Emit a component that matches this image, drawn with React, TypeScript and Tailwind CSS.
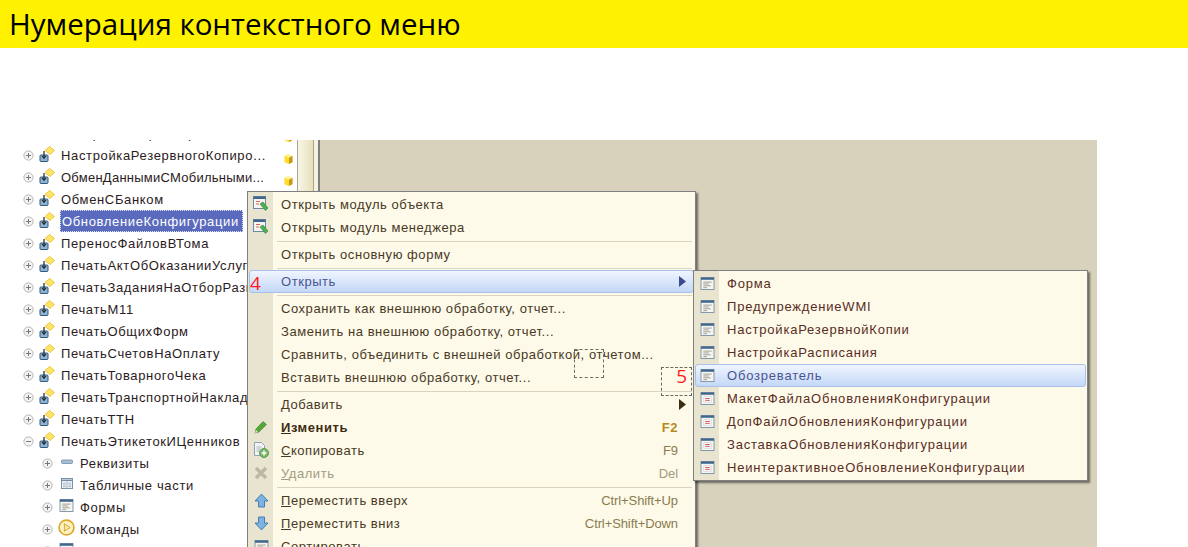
import React from 'react';

// --- icons ---
const Expander = ({ open = false }: { open?: boolean }) => (
  <svg width="11" height="11" viewBox="0 0 11 11" className="shrink-0">
    <circle cx="5.5" cy="5.5" r="4.6" fill="#f4f4f4" stroke="#b4b4b4" />
    <path d={open ? 'M3 5.5h5' : 'M3 5.5h5M5.5 3v5'} stroke="#777" fill="none" />
  </svg>
);

const ModuleIcon = () => (
  <svg width="16" height="17" viewBox="0 0 16 17" className="shrink-0">
    <path d="M10.5 0.5 15.5 4.5l-4.5 4L6 4.5z" fill="#ffe566" stroke="#e8b830" strokeWidth="0.8" />
    <rect x="1" y="9" width="8" height="6.5" rx="1" fill="#8fb4d4" stroke="#33597c" />
    <path d="M5 5v6.5" stroke="#222" strokeWidth="1.2" />
    <path d="M3 10l2 2.4L7 10" fill="none" stroke="#222" strokeWidth="1.1" />
  </svg>
);

const Cube = () => (
  <svg width="9" height="10" viewBox="0 0 9 11" className="block">
    <path d="M0 2 4 0l5 2-4 2z" fill="#fff08a" />
    <path d="M0 2l5 2v7L0 9z" fill="#ffdc2e" />
    <path d="M5 4l4-2v7l-4 2z" fill="#c89a10" />
  </svg>
);

const ReqIcon = () => (
  <svg width="12" height="6" viewBox="0 0 12 6">
    <rect x="0.5" y="1" width="11" height="3.5" rx="1" fill="#a8c0d4" stroke="#6e8ba6" strokeWidth="0.8" />
  </svg>
);

const TableIcon = () => (
  <svg width="12" height="11" viewBox="0 0 13 12">
    <rect x="0.5" y="0.5" width="12" height="11" fill="#f2f5f8" stroke="#6f8aa4" />
    <path d="M0.5 2.5h12" stroke="#6f8aa4" strokeWidth="1.5" />
    <path d="M6.5 3v8.5M2 5.5h3M2 7.5h3M2 9.5h3M8 5.5h3M8 7.5h3M8 9.5h3" stroke="#9db0c2" />
  </svg>
);

const FormIcon = () => (
  <svg width="15" height="13" viewBox="0 0 15 14" className="shrink-0">
    <rect x="0.5" y="0.5" width="14" height="13" fill="#f6f5ef" stroke="#7c93a8" />
    <rect x="0.5" y="0.5" width="14" height="2.5" fill="#41688c" />
    <path d="M3 5.5h9M3 7.5h6M3 9.5h8M3 11.5h4" stroke="#9a9a94" />
  </svg>
);

const LayoutIcon = () => (
  <svg width="15" height="13" viewBox="0 0 15 14" className="shrink-0">
    <rect x="0.5" y="0.5" width="14" height="13" fill="#f6f5ef" stroke="#7c93a8" />
    <rect x="0.5" y="0.5" width="14" height="2.5" fill="#41688c" />
    <rect x="3.5" y="5" width="8" height="6" fill="#fff" stroke="#b4bcc4" strokeDasharray="1 1" />
    <path d="M5 7h5M5 9h5" stroke="#d05050" />
  </svg>
);

const CommandIcon = () => (
  <svg width="17" height="17" viewBox="0 0 16 16">
    <circle cx="8" cy="8" r="7" fill="#fff3c0" stroke="#dca92a" strokeWidth="1.6" />
    <path d="M6 4.5 11.5 8 6 11.5z" fill="#fbe9a8" stroke="#c9982a" strokeWidth="0.8" />
  </svg>
);

const OpenModuleIcon = () => (
  <svg width="16" height="16" viewBox="0 0 16 16">
    <rect x="0.5" y="0.5" width="12" height="12" fill="#f6f5ef" stroke="#6f8aa4" />
    <rect x="0.5" y="0.5" width="12" height="2.5" fill="#41688c" />
    <path d="M3 5.5h4M3 8h3" stroke="#d86060" />
    <path d="M7 8l3-2 5 6-2.5 2.5z" fill="#4caf50" stroke="#2f7d32" strokeWidth="0.6" />
  </svg>
);

const PencilIcon = () => (
  <svg width="14" height="14" viewBox="0 0 14 14">
    <path d="M1 13l1-4 7-7.5 3.5 3L5 12z" fill="#55a838" stroke="#3a8024" strokeWidth="0.6" />
    <path d="M1 13l1-3 2 2z" fill="#dfe8c8" />
  </svg>
);

const CopyIcon = () => (
  <svg width="16" height="16" viewBox="0 0 16 16">
    <path d="M1.5 0.5h7l3 3v10h-10z" fill="#f2f4f6" stroke="#8ea2b4" />
    <path d="M3.5 5h5M3.5 7h4M3.5 9h3" stroke="#a8b4c0" />
    <circle cx="11" cy="11" r="4.5" fill="#78b868" stroke="#5a9a4c" />
    <path d="M8.5 11h5M11 8.5v5" stroke="#fff" strokeWidth="1.4" />
  </svg>
);

const CrossIcon = () => (
  <svg width="14" height="14" viewBox="0 0 14 14">
    <path d="M2 2l10 10M12 2 2 12" stroke="#bdb8a6" strokeWidth="3.4" />
  </svg>
);

const ArrowIcon = ({ down = false }: { down?: boolean }) => (
  <svg width="15" height="15" viewBox="0 0 15 15">
    <path
      d={down ? 'M4.5 1h6v6H14l-6.5 7L1 7h3.5z' : 'M4.5 14h6V8H14L7.5 1 1 8h3.5z'}
      fill="#7db2e2"
      stroke="#3b75ae"
      strokeWidth="0.9"
    />
  </svg>
);

const Tri = ({ color }: { color: string }) => (
  <svg width="7" height="11" viewBox="0 0 7 11">
    <path d="M0 0l7 5.5L0 11z" fill={color} />
  </svg>
);

// --- tree ---
type TreeRow = { text: string; cube?: boolean; selected?: boolean; open?: boolean; tight?: boolean };

const roots: TreeRow[] = [
  { text: 'НастройкаПараметровУчета...', cube: true },
  { text: 'НастройкаРезервногоКопиро...', cube: true },
  { text: 'ОбменДаннымиСМобильными...', cube: true, tight: true },
  { text: 'ОбменСБанком' },
  { text: 'ОбновлениеКонфигурации', selected: true },
  { text: 'ПереносФайловВТома' },
  { text: 'ПечатьАктОбОказанииУслуг' },
  { text: 'ПечатьЗаданияНаОтборРазмещения' },
  { text: 'ПечатьМ11' },
  { text: 'ПечатьОбщихФорм' },
  { text: 'ПечатьСчетовНаОплату' },
  { text: 'ПечатьТоварногоЧека' },
  { text: 'ПечатьТранспортнойНакладной' },
  { text: 'ПечатьТТН' },
  { text: 'ПечатьЭтикетокИЦенников', open: true },
];

const children = [
  { text: 'Реквизиты', icon: <ReqIcon /> },
  { text: 'Табличные части', icon: <TableIcon /> },
  { text: 'Формы', icon: <FormIcon /> },
  { text: 'Команды', icon: <CommandIcon /> },
  { text: 'Макеты', icon: <FormIcon /> },
];

// --- context menu ---
type Item = {
  key_?: string;
  text: string;
  icon?: React.ReactNode;
  hint?: string;
  bold?: boolean;
  off?: boolean;
  hover?: boolean;
  arrow?: boolean;
};

const MenuRow = ({ item }: { item: Item }) => (
  <div
    className={
      item.hover
        ? 'mx-px flex h-[23px] items-center rounded-[3px] border border-[#a9c0ea] bg-gradient-to-b from-[#f0f5fe] to-[#c4d8f8] text-[#4b5590]'
        : 'mx-px flex h-[23px] items-center border border-transparent'
    }
  >
    <div className="mb-px flex w-[23px] shrink-0 justify-center pr-px">{item.icon}</div>
    <div
      className={
        item.bold
          ? 'flex-1 whitespace-nowrap pl-[8px] font-bold text-[#3d2c12]'
          : item.off
            ? 'flex-1 whitespace-nowrap pl-[8px] text-[#a39a80]'
            : 'flex-1 whitespace-nowrap pl-[8px]'
      }
    >
      {item.key_ && <span className="underline">{item.key_}</span>}
      {item.text}
    </div>
    {item.hint && (
      <div
        className={
          item.bold
            ? 'whitespace-nowrap font-bold tracking-[0.5px] text-[#b48a1c]'
            : item.off
              ? 'whitespace-nowrap tracking-[-0.1px] text-[#a39a80]'
              : 'whitespace-nowrap tracking-[-0.1px] text-[#8b7a4e]'
        }
      >
        {item.hint}
      </div>
    )}
    <div className="flex w-[15px] shrink-0 pl-[1px]">
      {item.arrow && <Tri color={item.hover ? '#3a4a8c' : '#3a2e10'} />}
    </div>
  </div>
);

const Sep = () => (
  <div className="flex h-[4px] items-center pl-[29px] pr-[3px]">
    <div className="h-px w-full bg-[#d9d4be]" />
  </div>
);

const subForms = ['Форма', 'ПредупреждениеWMI', 'НастройкаРезервнойКопии', 'НастройкаРасписания', 'Обозреватель'];
const subLayouts = [
  'МакетФайлаОбновленияКонфигурации',
  'ДопФайлОбновленияКонфигурации',
  'ЗаставкаОбновленияКонфигурации',
  'НеинтерактивноеОбновлениеКонфигурации',
];

export default function App() {
  return (
    <div className="h-[547px] w-[1188px] overflow-hidden bg-white">
      <div className="flex h-[48px] items-center bg-[#fff200] pl-[9px] font-['Open_Sans',sans-serif] text-[29.5px] text-black">
        Нумерация контекстного меню
      </div>

      <div className="relative mt-[92px] flex h-[407px] w-[1097px] overflow-hidden font-['Liberation_Sans',sans-serif] text-[13px] tracking-[0.55px]">
        {/* tree */}
        <div className="w-[297px] shrink-0 overflow-hidden text-[#2b1b22] tracking-[0.65px]">
          <div className="-mt-[18px]">
            {roots.map((r) => (
              <div key={r.text} className="flex h-[22px] items-center whitespace-nowrap pl-[23px]">
                <Expander open={r.open} />
                <div className="ml-[5px] mb-px">
                  <ModuleIcon />
                </div>
                <div
                  className={
                    r.selected
                      ? 'ml-[5px] flex h-[22px] w-[183px] items-center border border-dotted border-[#dfe3f5] bg-[#5a6bbd] pl-px pt-px text-white'
                      : r.tight
                        ? 'ml-[6px] w-[214px] pt-px tracking-[0.25px]'
                        : 'ml-[6px] w-[214px] pt-px'
                  }
                >
                  {r.text}
                </div>
                {r.cube && (
                  <div className="ml-[9px] mt-[8px]">
                    <Cube />
                  </div>
                )}
              </div>
            ))}
            {children.map((c) => (
              <div key={c.text} className="flex h-[22px] items-center whitespace-nowrap pl-[42px]">
                <Expander />
                <div className="mb-[3px] ml-[5px] flex w-[17px] justify-center">{c.icon}</div>
                <div className="ml-[5px] pt-px">{c.text}</div>
              </div>
            ))}
          </div>
        </div>

        {/* splitter */}
        <div className="w-[17px] shrink-0 border-x border-[#a8a596] bg-gradient-to-r from-[#f8f5e6] to-[#e8e0bb]" />
        <div className="w-[4px] shrink-0 bg-[#f6f2e0]" />
        <div className="w-[2px] shrink-0 bg-[#7f7f7f]" />
        <div className="flex-1 bg-[#d8d2bc]" />

        {/* context menu */}
        <div className="absolute left-[247px] top-[51px] w-[449px] border border-[#7f7f7f] bg-[linear-gradient(to_right,#e9e4cf_25px,#fdfaea_25px)] py-px text-[#49391f] shadow-[2px_2px_2px_rgba(0,0,0,0.5)]">
          <MenuRow item={{ text: 'Открыть модуль объекта', icon: <OpenModuleIcon /> }} />
          <MenuRow item={{ text: 'Открыть модуль менеджера', icon: <OpenModuleIcon /> }} />
          <Sep />
          <MenuRow item={{ text: 'Открыть основную форму' }} />
          <Sep />
          <MenuRow item={{ text: 'Открыть', hover: true, arrow: true }} />
          <Sep />
          <MenuRow item={{ text: 'Сохранить как внешнюю обработку, отчет...' }} />
          <MenuRow item={{ text: 'Заменить на внешнюю обработку, отчет...' }} />
          <MenuRow item={{ text: 'Сравнить, объединить с внешней обработкой, отчетом...' }} />
          <MenuRow item={{ text: 'Вставить внешнюю обработку, отчет...' }} />
          <Sep />
          <MenuRow item={{ text: 'Добавить', arrow: true }} />
          <MenuRow item={{ key_: 'И', text: 'зменить', bold: true, icon: <PencilIcon />, hint: 'F2' }} />
          <MenuRow item={{ key_: 'С', text: 'копировать', icon: <CopyIcon />, hint: 'F9' }} />
          <MenuRow item={{ key_: 'У', text: 'далить', off: true, icon: <CrossIcon />, hint: 'Del' }} />
          <Sep />
          <MenuRow item={{ key_: 'П', text: 'ереместить вверх', icon: <ArrowIcon />, hint: 'Ctrl+Shift+Up' }} />
          <MenuRow item={{ key_: 'П', text: 'ереместить вниз', icon: <ArrowIcon down />, hint: 'Ctrl+Shift+Down' }} />
          <MenuRow item={{ key_: 'С', text: 'ортировать', icon: <FormIcon /> }} />
        </div>

        {/* submenu */}
        <div className="absolute left-[693px] top-[130px] w-[395px] border border-[#7f7f7f] bg-[linear-gradient(to_right,#e9e4cf_25px,#fdfaea_25px)] py-px tracking-[0.8px] text-[#5a2d1e] shadow-[2px_2px_2px_rgba(0,0,0,0.5)]">
          {subForms.map((t) => (
            <MenuRow key={t} item={{ text: t, icon: <FormIcon />, hover: t === 'Обозреватель' }} />
          ))}
          {subLayouts.map((t) => (
            <MenuRow key={t} item={{ text: t, icon: <LayoutIcon /> }} />
          ))}
        </div>

        {/* annotations */}
        <div className="absolute left-[250px] top-[131px] font-['Open_Sans',sans-serif] text-[19px] leading-[24px] tracking-normal text-[#ff1a1a]">4</div>
        <div className="absolute left-[574px] top-[209px] h-[29px] w-[30px] border border-dashed border-[#6b6b5e]" />
        <div className="absolute left-[661px] top-[227px] flex h-[29px] w-[31px] justify-end border border-dashed border-[#6b6b5e] pr-[4px] font-['Open_Sans',sans-serif] text-[19px] leading-[16px] tracking-normal text-[#ff1a1a]">5</div>
      </div>
    </div>
  );
}
